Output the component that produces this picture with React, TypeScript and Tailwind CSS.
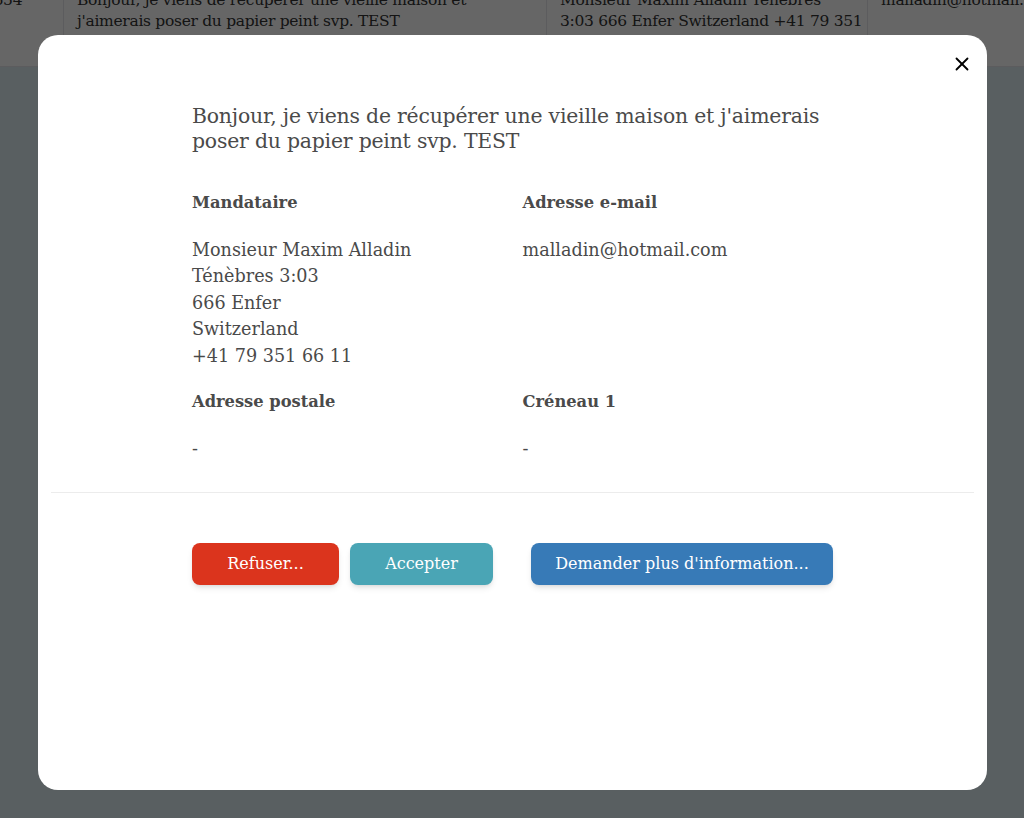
import { X } from "lucide-react";

const serif = { fontFamily: '"DejaVu Serif", "Liberation Serif", serif' };

export default function App() {
  return (
    <div className="relative h-[818px] w-[1024px] overflow-hidden bg-[#dfeef3]" style={serif}>
      {/* table behind the overlay */}
      <div className="flex h-[67px] border-b border-gray-200 bg-white text-[15.5px] leading-[21px] text-[#333] tracking-[-0.3px] whitespace-nowrap">
        <div className="w-[64px] shrink-0 overflow-hidden border-r border-gray-200">
          <div className="-mt-[10px] -ml-[16px]">4654</div>
        </div>
        <div className="w-[483px] shrink-0 overflow-hidden border-r border-gray-200 px-[13px]">
          <div className="-mt-[10px]">
            Bonjour, je viens de récupérer une vieille maison et
            <br />
            j'aimerais poser du papier peint svp. TEST
          </div>
        </div>
        <div className="w-[321px] shrink-0 overflow-hidden border-r border-gray-200 px-[13px]">
          <div className="-mt-[10px]">
            Monsieur Maxim Alladin Ténèbres
            <br />
            3:03 666 Enfer Switzerland +41 79 351
          </div>
        </div>
        <div className="overflow-hidden px-[13px]">
          <div className="-mt-[10px]">malladin@hotmail.com</div>
        </div>
      </div>

      {/* overlay */}
      <div className="absolute inset-0 bg-black/60" />

      {/* modal */}
      <div className="absolute left-[38px] top-[35px] h-[755px] w-[949px] rounded-[20px] bg-white text-[#4a4a4a]">
        <button className="absolute right-[14px] top-[18px] text-black">
          <X size={22} strokeWidth={2} />
        </button>

        <div className="mx-auto w-[641px] pt-[69px]">
          <p className="text-[20.4px] leading-[25px] tracking-[-0.2px]">
            Bonjour, je viens de récupérer une vieille maison et j'aimerais poser du papier peint svp. TEST
          </p>

          <div className="mt-[36px] grid grid-cols-2 gap-x-5 text-[17.6px] leading-[26.5px]">
            <div>
              <h3 className="text-[16.3px] font-bold">Mandataire</h3>
              <div className="mt-5">
                Monsieur Maxim Alladin
                <br />
                Ténèbres 3:03
                <br />
                666 Enfer
                <br />
                Switzerland
                <br />
                +41 79 351 66 11
              </div>
            </div>
            <div>
              <h3 className="text-[16.3px] font-bold">Adresse e-mail</h3>
              <div className="mt-5">malladin@hotmail.com</div>
            </div>
            <div className="mt-5">
              <h3 className="text-[16.3px] font-bold">Adresse postale</h3>
              <div className="mt-5">-</div>
            </div>
            <div className="mt-5">
              <h3 className="text-[16.3px] font-bold">Créneau 1</h3>
              <div className="mt-5">-</div>
            </div>
          </div>
        </div>

        <div className="mx-[13px] mt-[30px] border-t border-[#ececec]" />

        <div className="mx-auto flex w-[641px] pt-[50px] text-[16px] text-white">
          <button className="h-[42px] w-[147px] rounded-lg bg-[#db341d] shadow-md">Refuser...</button>
          <button className="ml-[11px] h-[42px] w-[143px] rounded-lg bg-[#4aa5b5] shadow-md">Accepter</button>
          <button className="ml-[38px] h-[42px] w-[302px] rounded-lg bg-[#377ab7] shadow-md">
            Demander plus d'information...
          </button>
        </div>
      </div>
    </div>
  );
}
